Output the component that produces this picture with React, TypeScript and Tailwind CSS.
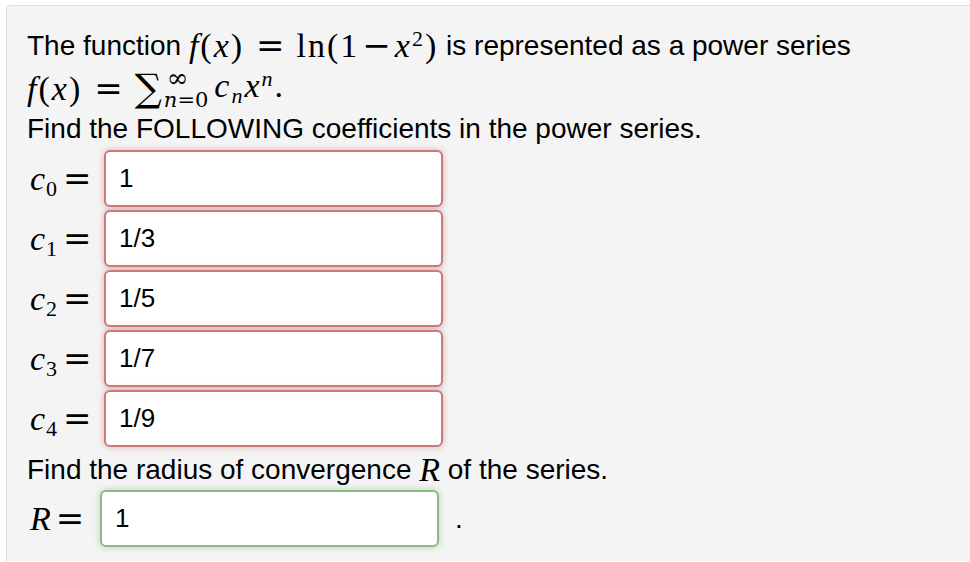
import React from 'react';

const serif = { fontFamily: '"Liberation Serif", "DejaVu Serif", serif' };
const sym = { fontFamily: '"DejaVu Serif", "Liberation Serif", serif' };

function M({ children, t = true }: { children: React.ReactNode; t?: boolean }) {
  return (
    <span className={'text-[34px] leading-none whitespace-nowrap ' + (t ? 'tracking-[2px]' : '')} style={serif}>
      {children}
    </span>
  );
}

function I({ children }: { children: React.ReactNode }) {
  return <span className="italic">{children}</span>;
}

// relation / binary operator with KaTeX-like spacing
function Op({ c, wide }: { c: string; wide?: boolean }) {
  return (
    <span
      className={(wide ? 'mr-[12px] ml-[12px]' : 'mr-[4px] ml-[3px]') + ' inline-block text-[34px] font-light tracking-normal'}
      style={sym}
    >
      {c}
    </span>
  );
}

function Field({ value, ok }: { value: string; ok?: boolean }) {
  return (
    <div
      className={
        'flex h-[57px] w-[339px] items-center rounded-[6px] border-2 bg-white pl-[13px] text-[26px] text-black ' +
        (ok
          ? 'border-[#8cbb85] shadow-[0_0_6px_rgba(120,180,110,0.55)]'
          : 'border-[#c97a7a] shadow-[0_0_6px_rgba(200,110,110,0.55)]')
      }
    >
      {value}
    </div>
  );
}

function CoefRow({ n, value }: { n: number; value: string }) {
  return (
    <div className="mb-[3px] flex h-[57px] items-center">
      <div className="flex w-[77px] items-center pl-[3px]">
        <M t={false}>
          <I>c</I>
          <sub className="ml-[1px] text-[22px]">{n}</sub>
          <span className="ml-[6px] inline-block text-[34px]" style={sym}>=</span>
        </M>
      </div>
      <Field value={value} />
    </div>
  );
}

export default function App() {
  const coefs = ['1', '1/3', '1/5', '1/7', '1/9'];
  return (
    <div className="h-[562px] overflow-hidden bg-white pt-[5px] pl-[6px]" style={{ fontFamily: '"Liberation Sans", Arial, sans-serif' }}>
      <div className="h-[556px] rounded-tl-[5px] border-t border-l border-[#dcdcdc] bg-[#f4f4f4] pt-[18px] pl-[20px] text-[28px] text-black">
        <div className="flex h-[43px] items-center whitespace-nowrap">
          <span>The function&nbsp;</span>
          <M>
            <I>f</I>(<I>x</I>)<Op c="=" wide />ln(1<Op c="−" /><I>x</I>
            <sup className="text-[22px]">2</sup>)
          </M>
          <span>&nbsp;is represented as a power series</span>
        </div>
        <div className="flex h-[42px] items-center whitespace-nowrap">
          <M>
            <I>f</I>(<I>x</I>)<Op c="=" wide />
          </M>
          <span className="text-[38px] leading-[34px]" style={sym}>∑</span>
          <span className="mt-[4px] ml-[2px] flex h-[38px] flex-col justify-between text-[21px]" style={sym}>
            <span className="pl-[3px] text-[26px] leading-[14px] font-light">∞</span>
            <span className="leading-[18px] font-light">
              <span className="italic">n</span>=0
            </span>
          </span>
          <span className="ml-[6px]">
            <M>
              <I>c</I>
              <sub className="text-[22px] italic">n</sub>
              <I>x</I>
              <sup className="text-[22px] italic">n</sup>.
            </M>
          </span>
        </div>
        <div className="mb-[1px] flex h-[40px] items-center whitespace-nowrap">
          Find the FOLLOWING coefficients in the power series.
        </div>
        {coefs.map((v, i) => (
          <CoefRow key={i} n={i} value={v} />
        ))}
        <div className="flex h-[40px] items-center whitespace-nowrap">
          <span>Find the radius of convergence&nbsp;</span>
          <M t={false}>
            <I>R</I>
          </M>
          <span>&nbsp;of the series.</span>
        </div>
        <div className="flex h-[57px] items-center">
          <div className="flex w-[73px] items-center pl-[3px]">
            <M t={false}>
              <I>R</I>
              <span className="ml-[5px] inline-block text-[34px]" style={sym}>=</span>
            </M>
          </div>
          <Field value="1" ok />
          <span className="ml-[16px] text-[28px]">.</span>
        </div>
      </div>
    </div>
  );
}
